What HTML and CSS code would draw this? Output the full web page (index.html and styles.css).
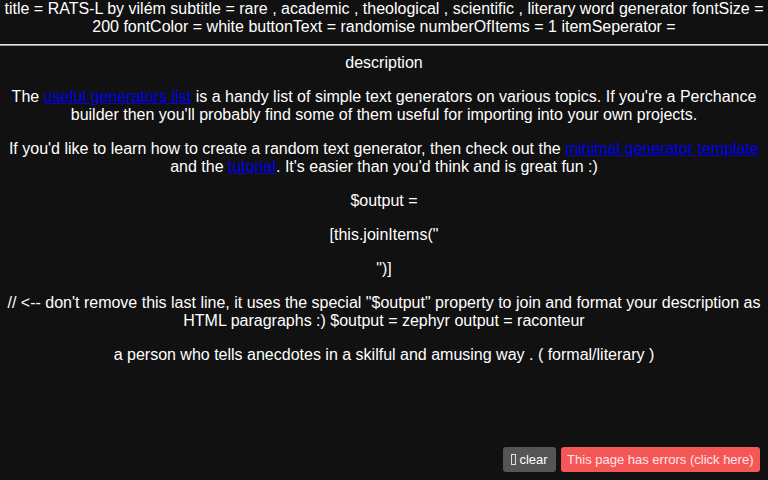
FILE: index.html
```html
<!DOCTYPE html>
<html>
<head>
<meta charset="utf-8">
<link rel="stylesheet" href="styles.css">
</head>
<body>
<div class="head">title = RATS-L by vilém subtitle = rare , academic , theological , scientific , literary word generator fontSize = 200 fontColor = white buttonText = randomise numberOfItems = 1 itemSeperator =</div>
<hr class="rule">
<p class="desc">description</p>
<p>The <a href="#">useful generators list</a> is a handy list of simple text generators on various topics. If you're a Perchance builder then you'll probably find some of them useful for importing into your own projects.</p>
<p>If you'd like to learn how to create a random text generator, then check out the <a href="#">minimal generator template</a> and the <a href="#">tutorial</a>. It's easier than you'd think and is great fun :)</p>
<p>$output =</p>
<p>[this.joinItems("</p>
<p>")]</p>
<p>// &lt;-- don't remove this last line, it uses the special "$output" property to join and format your description as HTML paragraphs :) $output = zephyr output = raconteur</p>
<p>a person who tells anecdotes in a skilful and amusing way . ( formal/literary )</p>
<div class="tools">
  <button class="btn clear"><span class="tofu"></span> clear</button>
  <button class="btn errors">This page has errors (click here)</button>
</div>
</body>
</html>
```
FILE: styles.css
```css
html, body {
  margin: 0;
  padding: 0;
  background: #111111;
}
body {
  color: #ffffff;
  font-family: "Liberation Sans", Arial, sans-serif;
  font-size: 16px;
  line-height: 18px;
  text-align: center;
}
.head {
  padding: 0 2px;
}
.rule {
  margin: 8px 0 8px;
  border: 0;
  border-top: 1px solid #e6e6e6;
  border-bottom: 1px solid #9a9a9a;
  height: 0;
}
p {
  margin: 16px 0;
}
p.desc {
  margin-top: 0;
}
a {
  color: #0000ee;
  text-decoration: underline;
}
.tools {
  position: fixed;
  right: 8px;
  bottom: 8px;
  display: flex;
  gap: 5px;
}
.btn {
  font-family: "Liberation Sans", Arial, sans-serif;
  font-size: 13px;
  line-height: 15px;
  border: 0;
  border-radius: 3px;
  padding: 5px 8px;
  cursor: pointer;
}
.clear {
  background: #555555;
  color: #ffffff;
}
.errors {
  background: #f55656;
  color: #fde6e6;
  padding: 5px 6.5px;
}
.tofu {
  display: inline-block;
  width: 3px;
  height: 9px;
  border: 1px solid #dddddd;
  vertical-align: -1px;
}
```
